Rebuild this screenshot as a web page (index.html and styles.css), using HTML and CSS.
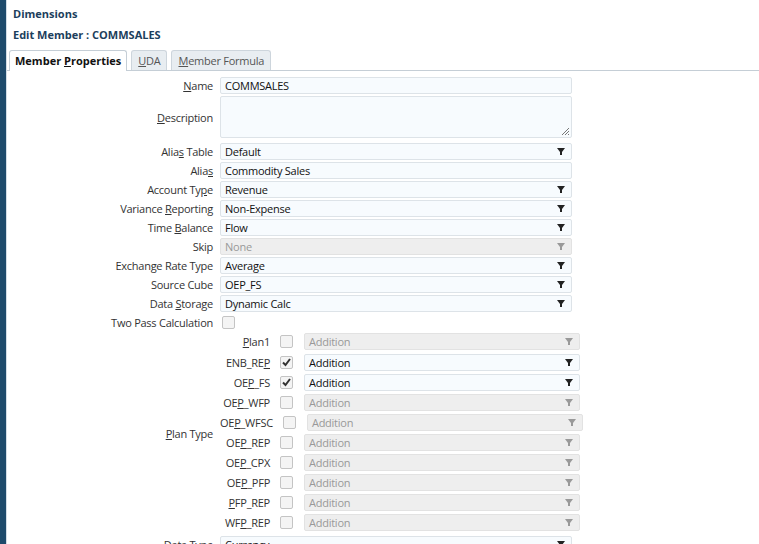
FILE: index.html
```html
<!DOCTYPE html>
<html>
<head>
<meta charset="utf-8">
<link rel="stylesheet" href="styles.css">
</head>
<body>
<div class="app">
  <div class="rail"></div>
  <main class="main">
    <div class="title">Dimensions</div>
    <div class="subtitle">Edit Member : COMMSALES</div>
    <div class="tabs">
      <div class="tab active">Member <u>P</u>roperties</div>
      <div class="tab"><u>U</u>DA</div>
      <div class="tab"><u>M</u>ember Formula</div>
    </div>
    <div class="form">
      <div class="row"><label class="lbl"><u>N</u>ame</label><div class="input">COMMSALES</div></div>
      <div class="row row-desc"><label class="lbl"><u>D</u>escription</label><div class="input textarea"><svg class="grip" width="9" height="9" viewBox="0 0 9 9"><path d="M8 1L1 8M8 4L4 8M8 7L7 8" stroke="#777" stroke-width="1" fill="none"/></svg></div></div>
      <div class="row"><label class="lbl">Alia<u>s</u> Table</label><div class="input select"><span>Default</span><svg class="arr" width="8" height="7" viewBox="0 0 8 7"><path d="M0 0H8L5 4V7H3V4Z" fill="#222"/></svg></div></div>
      <div class="row"><label class="lbl">Alia<u>s</u></label><div class="input">Commodity Sales</div></div>
      <div class="row"><label class="lbl">Account Ty<u>p</u>e</label><div class="input select"><span>Revenue</span><svg class="arr" width="8" height="7" viewBox="0 0 8 7"><path d="M0 0H8L5 4V7H3V4Z" fill="#222"/></svg></div></div>
      <div class="row"><label class="lbl">Variance <u>R</u>eporting</label><div class="input select"><span>Non-Expense</span><svg class="arr" width="8" height="7" viewBox="0 0 8 7"><path d="M0 0H8L5 4V7H3V4Z" fill="#222"/></svg></div></div>
      <div class="row"><label class="lbl">Time <u>B</u>alance</label><div class="input select"><span>Flow</span><svg class="arr" width="8" height="7" viewBox="0 0 8 7"><path d="M0 0H8L5 4V7H3V4Z" fill="#222"/></svg></div></div>
      <div class="row"><label class="lbl">Skip</label><div class="input select disabled"><span>None</span><svg class="arr" width="8" height="7" viewBox="0 0 8 7"><path d="M0 0H8L5 4V7H3V4Z" fill="#999"/></svg></div></div>
      <div class="row"><label class="lbl">Exchange Rate Type</label><div class="input select"><span>Average</span><svg class="arr" width="8" height="7" viewBox="0 0 8 7"><path d="M0 0H8L5 4V7H3V4Z" fill="#222"/></svg></div></div>
      <div class="row"><label class="lbl">Source Cube</label><div class="input select"><span>OEP_FS</span><svg class="arr" width="8" height="7" viewBox="0 0 8 7"><path d="M0 0H8L5 4V7H3V4Z" fill="#222"/></svg></div></div>
      <div class="row"><label class="lbl">Data <u>S</u>torage</label><div class="input select"><span>Dynamic Calc</span><svg class="arr" width="8" height="7" viewBox="0 0 8 7"><path d="M0 0H8L5 4V7H3V4Z" fill="#222"/></svg></div></div>
      <div class="row"><label class="lbl">Two Pass Calculation</label><div class="cb cb-main"></div></div>

      <div class="plan-section">
        <label class="lbl"><u>P</u>lan Type</label>
        <div class="plans">
          <div class="plan plan-first"><span class="plbl"><u>P</u>lan1</span><span class="cb"></span><div class="input select disabled psel"><span>Addition</span><svg class="arr" width="8" height="7" viewBox="0 0 8 7"><path d="M0 0H8L5 4V7H3V4Z" fill="#999"/></svg></div></div>
          <div class="plan"><span class="plbl">ENB_RE<u>P</u></span><span class="cb checked"><svg width="11" height="11" viewBox="0 0 11 11"><path d="M2 5.5L4.5 8L9 2" stroke="#333" stroke-width="2" fill="none"/></svg></span><div class="input select psel"><span>Addition</span><svg class="arr" width="8" height="7" viewBox="0 0 8 7"><path d="M0 0H8L5 4V7H3V4Z" fill="#222"/></svg></div></div>
          <div class="plan"><span class="plbl">OE<u>P</u>_FS</span><span class="cb checked"><svg width="11" height="11" viewBox="0 0 11 11"><path d="M2 5.5L4.5 8L9 2" stroke="#333" stroke-width="2" fill="none"/></svg></span><div class="input select psel"><span>Addition</span><svg class="arr" width="8" height="7" viewBox="0 0 8 7"><path d="M0 0H8L5 4V7H3V4Z" fill="#222"/></svg></div></div>
          <div class="plan"><span class="plbl">OE<u>P</u>_WFP</span><span class="cb"></span><div class="input select disabled psel"><span>Addition</span><svg class="arr" width="8" height="7" viewBox="0 0 8 7"><path d="M0 0H8L5 4V7H3V4Z" fill="#999"/></svg></div></div>
          <div class="plan"><span class="plbl">OE<u>P</u>_WFSC</span><span class="cb"></span><div class="input select disabled psel"><span>Addition</span><svg class="arr" width="8" height="7" viewBox="0 0 8 7"><path d="M0 0H8L5 4V7H3V4Z" fill="#999"/></svg></div></div>
          <div class="plan"><span class="plbl">OE<u>P</u>_REP</span><span class="cb"></span><div class="input select disabled psel"><span>Addition</span><svg class="arr" width="8" height="7" viewBox="0 0 8 7"><path d="M0 0H8L5 4V7H3V4Z" fill="#999"/></svg></div></div>
          <div class="plan"><span class="plbl">OE<u>P</u>_CPX</span><span class="cb"></span><div class="input select disabled psel"><span>Addition</span><svg class="arr" width="8" height="7" viewBox="0 0 8 7"><path d="M0 0H8L5 4V7H3V4Z" fill="#999"/></svg></div></div>
          <div class="plan"><span class="plbl">OE<u>P</u>_PFP</span><span class="cb"></span><div class="input select disabled psel"><span>Addition</span><svg class="arr" width="8" height="7" viewBox="0 0 8 7"><path d="M0 0H8L5 4V7H3V4Z" fill="#999"/></svg></div></div>
          <div class="plan"><span class="plbl"><u>P</u>FP_REP</span><span class="cb"></span><div class="input select disabled psel"><span>Addition</span><svg class="arr" width="8" height="7" viewBox="0 0 8 7"><path d="M0 0H8L5 4V7H3V4Z" fill="#999"/></svg></div></div>
          <div class="plan"><span class="plbl">WF<u>P</u>_REP</span><span class="cb"></span><div class="input select disabled psel"><span>Addition</span><svg class="arr" width="8" height="7" viewBox="0 0 8 7"><path d="M0 0H8L5 4V7H3V4Z" fill="#999"/></svg></div></div>
        </div>
      </div>

      <div class="row row-last"><label class="lbl">Data Type</label><div class="input select"><span>Currency</span><svg class="arr" width="8" height="7" viewBox="0 0 8 7"><path d="M0 0H8L5 4V7H3V4Z" fill="#222"/></svg></div></div>
    </div>
  </main>
</div>
</body>
</html>
```
FILE: styles.css
```css
* { box-sizing: border-box; }
html, body { margin: 0; padding: 0; background: #fff; }
body {
  font-family: "Open Sans", "Noto Sans", "Liberation Sans", sans-serif;
  font-size: 11px;
  letter-spacing: -0.25px;
  color: #333;
}
.app { display: flex; height: 544px; overflow: hidden; }
.rail {
  width: 7px;
  flex: 0 0 7px;
  background: #1e4a6b;
  border-right: 1px solid #d3dde6;
}
.main { flex: 1; min-width: 0; }
.title, .subtitle {
  font-weight: bold;
  color: #1c3e5c;
  padding-left: 6px;
  line-height: 14px;
  font-size: 11px;
  letter-spacing: 0;
}
.title { padding-top: 7px; }
.subtitle { padding-top: 7px; }
.tabs {
  display: flex;
  align-items: flex-end;
  gap: 4px;
  margin-top: 8px;
  padding-left: 2px;
  border-bottom: 1px solid #c5ced6;
  height: 21px;
}
.tab {
  height: 20px;
  line-height: 19px;
  padding: 0 6px;
  border: 1px solid #cdd5dc;
  border-bottom: none;
  border-radius: 3px 3px 0 0;
  background: #e8edf1;
  color: #555;
}
.tab.active {
  height: 21px;
  margin-bottom: -1px;
  background: #fff;
  color: #111;
  font-weight: bold;
  line-height: 20px;
  padding: 0 5px;
  border-color: #c5ced6;
  letter-spacing: 0;
}
.form { padding-top: 6px; }
.row {
  display: flex;
  align-items: center;
  height: 17px;
  margin-bottom: 2px;
}
.lbl {
  width: 206px;
  flex: 0 0 206px;
  text-align: right;
  margin-right: 7px;
  white-space: nowrap;
}
.input {
  position: relative;
  width: 352px;
  height: 17px;
  border: 1px solid #dde3e8;
  border-radius: 2px;
  background: #f7fbfe;
  color: #111;
  padding: 0 4px;
  line-height: 15px;
  white-space: nowrap;
}
.row-desc { height: 42px; margin-top: 2px; margin-bottom: 5px; }
.textarea { height: 42px; }
.grip { position: absolute; right: 1px; bottom: 1px; }
.select { display: flex; align-items: center; justify-content: space-between; }
.select .arr { margin-right: 2px; flex: 0 0 auto; }
.disabled { background: #eeeeee; color: #999; border-color: #e2e2e2; }
.cb {
  display: inline-flex;
  align-items: center;
  justify-content: center;
  width: 13px;
  height: 13px;
  border: 1px solid #c4c4c4;
  border-radius: 2px;
  background: #f4f4f4;
  flex: 0 0 13px;
}
.cb-main { margin-left: 2px; }
.plan-section { display: flex; align-items: center; margin-top: 1px; }
.plans { display: flex; flex-direction: column; }
.plan {
  display: flex;
  align-items: center;
  height: 17px;
  margin-bottom: 3px;
}
.plan-first { margin-bottom: 4px; }
.plbl { min-width: 50px; text-align: right; white-space: nowrap; margin-right: 10px; }
.plan .cb { margin-right: 11px; }
.psel { width: 276px; }
.row-last { margin-top: 2px; }
```
